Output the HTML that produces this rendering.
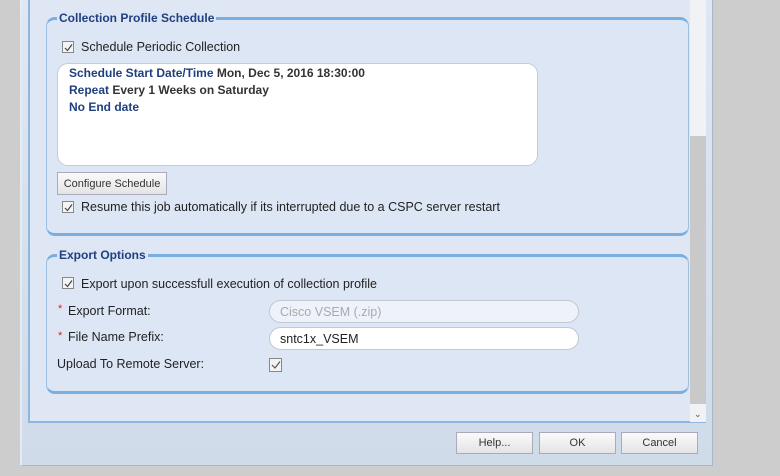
<!DOCTYPE html>
<html><head><style>
body{margin:0;width:780px;height:476px;background:#cdcdcd;position:relative;overflow:hidden;font-family:"Liberation Sans",sans-serif;font-size:12px;color:#222}
.abs{position:absolute}
.dlg{left:20px;top:-2px;width:693px;height:468px;background:linear-gradient(#dfe7f2,#cfdbe9);border:1px solid #a9b7c9;border-left:2px solid #e4ebf4;box-sizing:border-box}
.panel{left:28px;top:-2px;width:678px;height:425px;background:#dfe7f5;border:2px solid #8db6e0;border-top:none;box-sizing:border-box}
.sb{left:690px;top:0;width:16px;height:422px;background:#f0f2f5}
.thumb{left:690px;top:136px;width:16px;height:268px;background:#c9c9c9}
.fs{border:1px solid #9fbfe0;border-top:3px solid #79aee0;border-bottom:3px solid #79aee0;border-radius:9px;box-sizing:border-box;background:#dde6f5}
.lg{background:#dde6f5;color:#1f3f7f;font-weight:bold;font-size:12px;padding:0 2px}
.cb{width:12px;height:12px;border:1px solid #888;background:#f4f4f4;box-sizing:border-box}
.cb svg{position:absolute;left:1px;top:1px}
.t{font-size:12.5px;white-space:nowrap}
.b{color:#1f3f7f;font-weight:bold;font-size:12px}
.k{color:#333;font-weight:bold;font-size:12px}
.in{border:1px solid #c3c8d2;border-radius:12px;box-sizing:border-box;background:#fff;font-size:12.5px;padding:4px 0 0 10px}
.btn{border:1px solid #aab;background:linear-gradient(#fafafa,#e4e4e4);box-sizing:border-box;text-align:center;font-size:11px;color:#333;line-height:20px;font-family:"Liberation Sans",sans-serif}
.red{color:#d22;font-size:11px}
</style></head><body>
<div class="abs dlg"></div>
<div class="abs panel"></div>
<div class="abs sb"></div>
<div class="abs thumb"></div>
<div class="abs" style="left:694px;top:409px;font-size:9px;color:#555">&#8964;</div>

<div class="abs fs" style="left:46px;top:17px;width:643px;height:219px"></div>
<div class="abs lg" style="left:57px;top:11px">Collection Profile Schedule</div>
<div class="abs cb" style="left:62px;top:41px"><svg width="9" height="9"><path d="M1 5 L3.5 7.5 L8 1.5" stroke="#444" stroke-width="1.2" fill="none"/></svg></div>
<div class="abs t" style="left:81px;top:40px">Schedule Periodic Collection</div>
<div class="abs" style="left:57px;top:63px;width:481px;height:103px;background:#fff;border:1px solid #c6ccd6;border-radius:11px;box-sizing:border-box"></div>
<div class="abs" style="left:69px;top:65px;line-height:17px"><span class="b">Schedule Start Date/Time</span> <span class="k">Mon, Dec 5, 2016 18:30:00</span><br><span class="b">Repeat</span> <span class="k">Every 1 Weeks on Saturday</span><br><span class="b">No End date</span></div>
<div class="abs btn" style="left:57px;top:172px;width:110px;height:23px;line-height:22px">Configure Schedule</div>
<div class="abs cb" style="left:62px;top:201px"><svg width="9" height="9"><path d="M1 5 L3.5 7.5 L8 1.5" stroke="#444" stroke-width="1.2" fill="none"/></svg></div>
<div class="abs t" style="left:81px;top:200px">Resume this job automatically if its interrupted due to a CSPC server restart</div>

<div class="abs fs" style="left:46px;top:254px;width:643px;height:140px"></div>
<div class="abs lg" style="left:57px;top:248px">Export Options</div>
<div class="abs cb" style="left:62px;top:277px"><svg width="9" height="9"><path d="M1 5 L3.5 7.5 L8 1.5" stroke="#444" stroke-width="1.2" fill="none"/></svg></div>
<div class="abs t" style="left:81px;top:277px">Export upon successfull execution of collection profile</div>
<div class="abs red" style="left:58px;top:303px">*</div>
<div class="abs t" style="left:68px;top:304px">Export Format:</div>
<div class="abs in" style="left:269px;top:300px;width:310px;height:23px;background:#eef2fa;color:#aaa">Cisco VSEM (.zip)</div>
<div class="abs red" style="left:58px;top:330px">*</div>
<div class="abs t" style="left:68px;top:330px">File Name Prefix:</div>
<div class="abs in" style="left:269px;top:327px;width:310px;height:23px">sntc1x_VSEM</div>
<div class="abs t" style="left:57px;top:357px">Upload To Remote Server:</div>
<div class="abs cb" style="left:269px;top:358px;width:13px;height:14px"><svg width="10" height="10"><path d="M1 5 L4 8 L9 1.5" stroke="#555" stroke-width="1.2" fill="none"/></svg></div>

<div class="abs btn" style="left:456px;top:432px;width:77px;height:22px">Help...</div>
<div class="abs btn" style="left:539px;top:432px;width:77px;height:22px">OK</div>
<div class="abs btn" style="left:621px;top:432px;width:77px;height:22px">Cancel</div>
</body></html>
